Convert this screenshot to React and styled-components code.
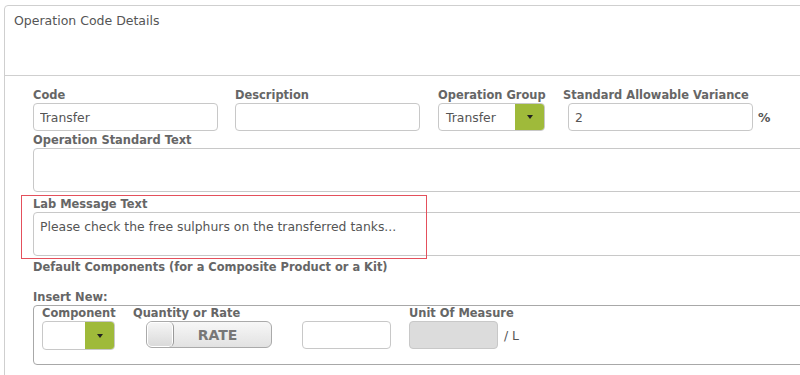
import styled, { createGlobalStyle } from "styled-components";

const GlobalStyle = createGlobalStyle`
  html, body {
    margin: 0;
    padding: 0;
    background: #fff;
    overflow: hidden;
  }
  body {
    font-family: "DejaVu Sans", Verdana, sans-serif;
  }
  input, textarea {
    font: inherit;
  }
`;

const Page = styled.div`
  width: 800px;
  height: 375px;
  padding: 5px 0 0 4px;
  box-sizing: border-box;
  overflow: hidden;
`;

const Panel = styled.section`
  width: 840px;
  min-height: 420px;
  border: 1px solid #cfcfcf;
  border-radius: 4px;
`;

const PanelHeader = styled.header`
  height: 70px;
  box-sizing: border-box;
  padding: 7px 9px 0;
  border-bottom: 1px solid #cfcfcf;
  font-size: 12.5px;
  line-height: 15px;
  color: #555;
`;

const PanelBody = styled.div`
  padding: 13px 0 0 28px;
`;

const Row = styled.div`
  display: flex;
  align-items: flex-start;
  margin-top: ${(p) => p.$top || 0}px;
`;

const Field = styled.div`
  display: flex;
  flex-direction: column;
  width: ${(p) => (p.$width ? `${p.$width}px` : "auto")};
  margin-right: ${(p) => p.$gap || 0}px;
  margin-top: ${(p) => p.$top || 0}px;
  position: relative;
`;

const Label = styled.label`
  display: block;
  font-size: 11.45px;
  font-weight: bold;
  line-height: 13px;
  height: 13px;
  color: #666;
  white-space: nowrap;
  margin-bottom: 1px;
`;

const SectionLabel = styled(Label)`
  margin-top: ${(p) => p.$top || 0}px;
`;

const TextInput = styled.input`
  box-sizing: border-box;
  width: ${(p) => p.$width || 185}px;
  height: 28px;
  padding: 0 6px;
  border: 1px solid #c8c8c8;
  border-radius: 4px;
  background: ${(p) => (p.$disabled ? "#dcdcdc" : "#fff")};
  font-size: 12.4px;
  color: #555;
  outline: none;
`;

const TextArea = styled.textarea`
  box-sizing: border-box;
  width: 800px;
  height: 44px;
  padding: 6px 6px;
  border: 1px solid #c8c8c8;
  border-radius: 4px;
  font-size: 12.4px;
  line-height: 15px;
  color: #555;
  resize: none;
  outline: none;
  display: block;
`;

const InputLine = styled.div`
  display: flex;
  align-items: center;
  margin-left: ${(p) => p.$indent || 0}px;
`;

const Suffix = styled.span`
  margin-left: ${(p) => p.$gap || 5}px;
  font-size: 12.4px;
  font-weight: ${(p) => (p.$bold ? "bold" : "normal")};
  color: #555;
`;

const Select = styled.div`
  display: flex;
  box-sizing: border-box;
  width: ${(p) => p.$width}px;
  height: ${(p) => p.$height || 28}px;
  border: 1px solid #c8c8c8;
  border-radius: 4px;
  overflow: hidden;
  background: #fff;
`;

const SelectValue = styled.div`
  flex: 1;
  padding-left: 7px;
  display: flex;
  align-items: center;
  font-size: 12.4px;
  color: #555;
`;

const SelectButton = styled.div`
  width: 29px;
  background: #9fba3a;
  display: flex;
  align-items: center;
  justify-content: center;

  &::after {
    content: "";
    border-left: 3px solid transparent;
    border-right: 3px solid transparent;
    border-top: 4px solid #222;
  }
`;

const Highlight = styled.div`
  position: absolute;
  left: -12px;
  top: -3px;
  width: 406px;
  height: 64px;
  box-sizing: border-box;
  border: 1.5px solid #e4505c;
  pointer-events: none;
`;

const InsertBox = styled.div`
  display: flex;
  align-items: flex-start;
  box-sizing: border-box;
  width: 800px;
  height: 60px;
  padding: 1px 0 0 8px;
  border: 1px solid #a8a8a8;
  border-radius: 4px;
`;

const Toggle = styled.div`
  display: flex;
  box-sizing: border-box;
  width: 126px;
  height: 27px;
  margin-left: 13px;
  border: 1px solid #aaa;
  border-radius: 6px;
  background: linear-gradient(#f7f7f7, #e2e2e2);
  overflow: hidden;
`;

const Knob = styled.div`
  width: 27px;
  box-sizing: border-box;
  border-right: 1px solid #999;
  border-radius: 5px;
  background: linear-gradient(#f6f6f6, #d9d9d9);
  box-shadow: inset 0 0 0 1px #fff;
`;

const ToggleText = styled.div`
  flex: 1;
  display: flex;
  align-items: center;
  justify-content: center;
  padding-right: 10px;
  font-size: 14px;
  font-weight: bold;
  color: #777;
`;

export default function App() {
  return (
    <>
      <GlobalStyle />
      <Page>
        <Panel>
          <PanelHeader>Operation Code Details</PanelHeader>
          <PanelBody>
            <Row>
              <Field $width={185} $gap={17}>
                <Label>Code</Label>
                <TextInput readOnly value="Transfer" />
              </Field>
              <Field $width={185} $gap={18}>
                <Label>Description</Label>
                <TextInput readOnly value="" />
              </Field>
              <Field $width={107} $gap={18}>
                <Label>Operation Group</Label>
                <Select $width={107}>
                  <SelectValue>Transfer</SelectValue>
                  <SelectButton />
                </Select>
              </Field>
              <Field>
                <Label>Standard Allowable Variance</Label>
                <InputLine $indent={5}>
                  <TextInput readOnly value="2" />
                  <Suffix $bold>%</Suffix>
                </InputLine>
              </Field>
            </Row>

            <Field $top={3}>
              <Label>Operation Standard Text</Label>
              <TextArea readOnly value="" />
            </Field>

            <Field $top={6}>
              <Highlight />
              <Label>Lab Message Text</Label>
              <TextArea
                readOnly
                value="Please check the free sulphurs on the transferred tanks..."
              />
            </Field>

            <SectionLabel $top={5}>
              Default Components (for a Composite Product or a Kit)
            </SectionLabel>
            <SectionLabel $top={17}>Insert New:</SectionLabel>

            <InsertBox>
              <Field $width={73} $gap={18}>
                <Label>Component</Label>
                <Select $width={73} $height={29}>
                  <SelectValue />
                  <SelectButton />
                </Select>
              </Field>
              <Field $width={139} $gap={30}>
                <Label>Quantity or Rate</Label>
                <Toggle>
                  <Knob />
                  <ToggleText>RATE</ToggleText>
                </Toggle>
              </Field>
              <Field $width={89} $gap={18}>
                <Label />
                <TextInput readOnly value="" $width={89} />
              </Field>
              <Field>
                <Label>Unit Of Measure</Label>
                <InputLine>
                  <TextInput readOnly value="" $width={89} $disabled />
                  <Suffix $gap={6}>/ L</Suffix>
                </InputLine>
              </Field>
            </InsertBox>
          </PanelBody>
        </Panel>
      </Page>
    </>
  );
}
